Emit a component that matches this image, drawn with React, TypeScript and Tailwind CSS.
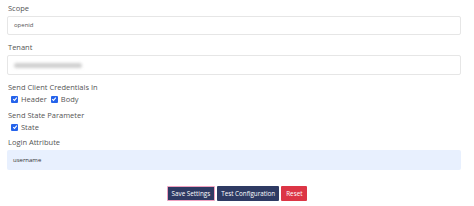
import React from "react";

function Check({ label }: { label: string }) {
  return (
    <label className="flex items-center gap-[3px]">
      <span className="flex h-[7px] w-[7px] items-center justify-center rounded-[1px] bg-[#2563eb]">
        <svg viewBox="0 0 10 10" className="h-[6px] w-[6px]">
          <path d="M2 5.2 L4.2 7.3 L8 2.8" fill="none" stroke="white" strokeWidth="1.8" />
        </svg>
      </span>
      <span>{label}</span>
    </label>
  );
}

export default function App() {
  return (
    <div
      className="w-[474px] h-[206px] bg-white text-[#555] px-[7px] pt-[3px]"
      style={{ fontFamily: "'Open Sans', 'DejaVu Sans', sans-serif" }}
    >
      <div className="text-[7.5px] leading-[10px] pl-[1px]">Scope</div>
      <div className="mt-[3px] h-[19px] w-[454px] border border-[#e6e6e6] rounded-[2px] flex items-center px-[6px] text-[6px] text-[#555]">
        openid
      </div>
      <div className="mt-[7px] text-[7.5px] leading-[10px] pl-[1px]">Tenant</div>
      <div className="mt-[3px] h-[20px] w-[454px] border border-[#e6e6e6] rounded-[2px] flex items-center px-[6px]">
        <span className="h-[5px] w-[68px] rounded-full bg-[#d0d0d0] blur-[1.5px]" />
      </div>
      <div className="mt-[7px] text-[7.5px] leading-[10px] pl-[1px]">Send Client Credentials In</div>
      <div className="mt-[2px] flex gap-[4px] text-[7.5px] leading-[10px] pl-[4px]">
        <Check label="Header" />
        <Check label="Body" />
      </div>
      <div className="mt-[6px] text-[7.5px] leading-[10px] pl-[1px]">Send State Parameter</div>
      <div className="mt-[2px] flex text-[7.5px] leading-[10px] pl-[4px]">
        <Check label="State" />
      </div>
      <div className="mt-[5px] text-[7.5px] leading-[10px] pl-[1px]">Login Attribute</div>
      <div className="mt-[3px] h-[20px] w-[454px] bg-[#e8f0fe] rounded-[2px] flex items-center px-[6px] text-[6px] text-[#333]">
        username
      </div>
      <div className="mt-[16px] flex justify-center gap-[2px] text-[6.3px] text-white">
        <button className="h-[15px] px-[4px] bg-[#2e3a63] border border-[#f0a0c0] rounded-[1px]">Save Settings</button>
        <button className="h-[15px] px-[4px] bg-[#2e3a63] rounded-[1px]">Test Configuration</button>
        <button className="h-[15px] px-[5px] bg-[#dc3545] rounded-[1px]">Reset</button>
      </div>
    </div>
  );
}
